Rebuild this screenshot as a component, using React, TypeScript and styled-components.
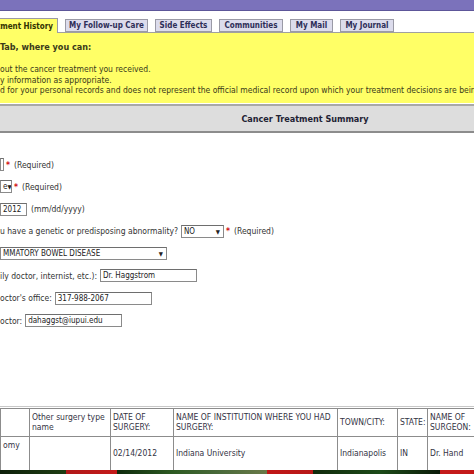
import React from "react";
import styled, { createGlobalStyle } from "styled-components";

const GlobalStyle = createGlobalStyle`
  html, body {
    margin: 0;
    padding: 0;
    background: #ffffff;
  }
  body {
    width: 474px;
    height: 474px;
    overflow: hidden;
    font-family: Tahoma, "DejaVu Sans Condensed", "DejaVu Sans", sans-serif;
    font-size: 8.5px;
    color: #333333;
  }
`;

const Page = styled.div`
  width: 474px;
  height: 474px;
  overflow: hidden;
  display: flex;
  flex-direction: column;
`;

const TopBar = styled.div`
  height: 10px;
  background: #7b72bb;
  border-bottom: 1px solid #5d5699;
`;

const TabStrip = styled.div`
  display: flex;
  align-items: flex-end;
  gap: 7px;
  padding-top: 7px;
  height: 14px;
  white-space: nowrap;
`;

const Tab = styled.div<{ active?: boolean; w: number }>`
  width: ${({ w }) => w}px;
  height: ${({ active }) => (active ? 15 : 13)}px;
  box-sizing: border-box;
  display: flex;
  align-items: center;
  justify-content: ${({ active }) => (active ? "flex-end" : "center")};
  padding-right: ${({ active }) => (active ? 4 : 0)}px;
  background: ${({ active }) => (active ? "#ffff66" : "#dcdcec")};
  border: 1px solid #9a9aa6;
  border-bottom: ${({ active }) => (active ? "none" : "1px solid #9a9aa6")};
  border-left: ${({ active }) => (active ? "none" : "1px solid #9a9aa6")};
  font-weight: bold;
  font-size: 8px;
  color: ${({ active }) => (active ? "#333300" : "#2e2e58")};
  overflow: hidden;
  position: relative;
  z-index: 1;
  margin-bottom: ${({ active }) => (active ? -1 : 0)}px;
`;

const InfoPanel = styled.div`
  height: 70px;
  background: #ffff66;
  border-top: 1px solid #a0a0a0;
  display: flex;
  flex-direction: column;
  white-space: nowrap;
  overflow: hidden;
  color: #3a3a1a;
`;

const PanelTitle = styled.div`
  font-weight: bold;
  font-size: 9px;
  padding-top: 9px;
  height: 22px;
`;

const PanelLine = styled.div`
  line-height: 10.5px;
  font-size: 8.5px;
`;

const SummaryBar = styled.div`
  margin-top: 1px;
  height: 25px;
  background: #dddddd;
  border-top: 2px solid #a8a8a8;
  border-bottom: 2px solid #8c8c8c;
  display: flex;
  align-items: center;
  justify-content: center;
  padding-left: 136px;
  font-weight: bold;
  font-size: 9px;
  color: #222233;
`;

const Form = styled.div`
  display: flex;
  flex-direction: column;
  gap: 9.3px;
  padding-top: 25px;
  white-space: nowrap;
`;

const Row = styled.div`
  display: flex;
  align-items: center;
  height: 13px;
  gap: 2px;
`;

const Label = styled.span`
  font-size: 8.5px;
  color: #333333;
  margin-right: 1px;
`;

const TextBox = styled.div<{ w: number }>`
  width: ${({ w }) => w}px;
  height: 13px;
  box-sizing: border-box;
  border: 1px solid #8a8a8a;
  border-top-color: #6e6e6e;
  background: #ffffff;
  display: flex;
  align-items: center;
  padding-left: 2px;
  font-size: 8px;
  color: #222222;
  overflow: hidden;
`;

const SelectBox = styled(TextBox)`
  justify-content: space-between;
  padding-right: 3px;
`;

const Arrow = styled.span`
  font-size: 6px;
  color: #222222;
`;

const Star = styled.span`
  color: #d01010;
  font-size: 8.5px;
  font-weight: bold;
`;

const Hint = styled.span`
  font-size: 8.5px;
  color: #333333;
  margin-left: 2px;
`;

const TableWrap = styled.div`
  margin-top: auto;
  border-top: 1px solid #c8c8c8;
  padding-top: 1px;
`;

const Table = styled.table`
  border-collapse: collapse;
  width: 477px;
  table-layout: fixed;
  border-top: 1px solid #8c8c8c;
`;

const Th = styled.td<{ w: number }>`
  width: ${({ w }) => w}px;
  box-sizing: border-box;
  height: 28px;
  border: 1px solid #8c8c8c;
  padding: 0 2px;
  font-size: 8.5px;
  line-height: 10.5px;
  color: #333344;
  vertical-align: middle;
  overflow: hidden;
`;

const Td = styled.td<{ top?: boolean }>`
  height: 34px;
  box-sizing: border-box;
  border: 1px solid #8c8c8c;
  border-bottom: none;
  padding: ${({ top }) => (top ? "3px 2px 0" : "0 2px")};
  font-size: 8.5px;
  color: #333344;
  vertical-align: ${({ top }) => (top ? "top" : "middle")};
  white-space: nowrap;
  overflow: hidden;
`;

const NoiseStrip = styled.div`
  height: 4px;
  background: linear-gradient(
    to right,
    #0d1f0a 0px,
    #1e3d12 66px,
    #b01818 66px,
    #c41a1a 117px,
    #0d2a0c 117px,
    #2d5a22 173px,
    #4a6a3a 220px,
    #6a7a48 267px,
    #c01616 267px,
    #b81818 313px,
    #102a0c 313px,
    #1c4a18 380px,
    #0a1a08 440px,
    #c41a1a 440px,
    #c41a1a 474px
  );
`;

const tabs = [
  { label: "My Follow-up Care", w: 83 },
  { label: "Side Effects", w: 57 },
  { label: "Communities", w: 64 },
  { label: "My Mail", w: 43 },
  { label: "My Journal", w: 54 },
];

export default function App() {
  return (
    <>
      <GlobalStyle />
      <Page>
        <TopBar />
        <TabStrip>
          <Tab active w={58}>ctment History</Tab>
          {tabs.map((t) => (
            <Tab key={t.label} w={t.w}>
              {t.label}
            </Tab>
          ))}
        </TabStrip>
        <InfoPanel>
          <PanelTitle>Tab, where you can:</PanelTitle>
          <PanelLine>out the cancer treatment you received.</PanelLine>
          <PanelLine>y information as appropriate.</PanelLine>
          <PanelLine>
            d for your personal records and does not represent the official medical record upon
            which your treatment decisions are bein
          </PanelLine>
        </InfoPanel>
        <SummaryBar>Cancer Treatment Summary</SummaryBar>
        <Form>
          <Row>
            <TextBox w={4} />
            <Star>*</Star>
            <Hint>(Required)</Hint>
          </Row>
          <Row>
            <SelectBox w={12}>
              <span>e</span>
              <Arrow>▼</Arrow>
            </SelectBox>
            <Star>*</Star>
            <Hint>(Required)</Hint>
          </Row>
          <Row>
            <TextBox w={27}>2012</TextBox>
            <Hint>(mm/dd/yyyy)</Hint>
          </Row>
          <Row>
            <Label>u have a genetic or predisposing abnormality?</Label>
            <SelectBox w={43}>
              <span>NO</span>
              <Arrow>▼</Arrow>
            </SelectBox>
            <Star>*</Star>
            <Hint>(Required)</Hint>
          </Row>
          <Row>
            <SelectBox w={167}>
              <span>MMATORY BOWEL DISEASE</span>
              <Arrow>▼</Arrow>
            </SelectBox>
          </Row>
          <Row>
            <Label>ily doctor, internist, etc.):</Label>
            <TextBox w={97}>Dr. Haggstrom</TextBox>
          </Row>
          <Row>
            <Label>octor's office:</Label>
            <TextBox w={97}>317-988-2067</TextBox>
          </Row>
          <Row>
            <Label>octor:</Label>
            <TextBox w={97}>dahaggst@iupui.edu</TextBox>
          </Row>
        </Form>
        <TableWrap>
          <Table>
            <tbody>
              <tr>
                <Th w={29}></Th>
                <Th w={81}>Other surgery type name</Th>
                <Th w={63}>DATE OF SURGERY:</Th>
                <Th w={164}>NAME OF INSTITUTION WHERE YOU HAD SURGERY:</Th>
                <Th w={60}>TOWN/CITY:</Th>
                <Th w={30}>STATE:</Th>
                <Th w={50}>NAME OF SURGEON:</Th>
              </tr>
              <tr>
                <Td top>omy</Td>
                <Td></Td>
                <Td>02/14/2012</Td>
                <Td>Indiana University</Td>
                <Td>Indianapolis</Td>
                <Td>IN</Td>
                <Td>Dr. Hand</Td>
              </tr>
            </tbody>
          </Table>
        </TableWrap>
        <NoiseStrip />
      </Page>
    </>
  );
}
